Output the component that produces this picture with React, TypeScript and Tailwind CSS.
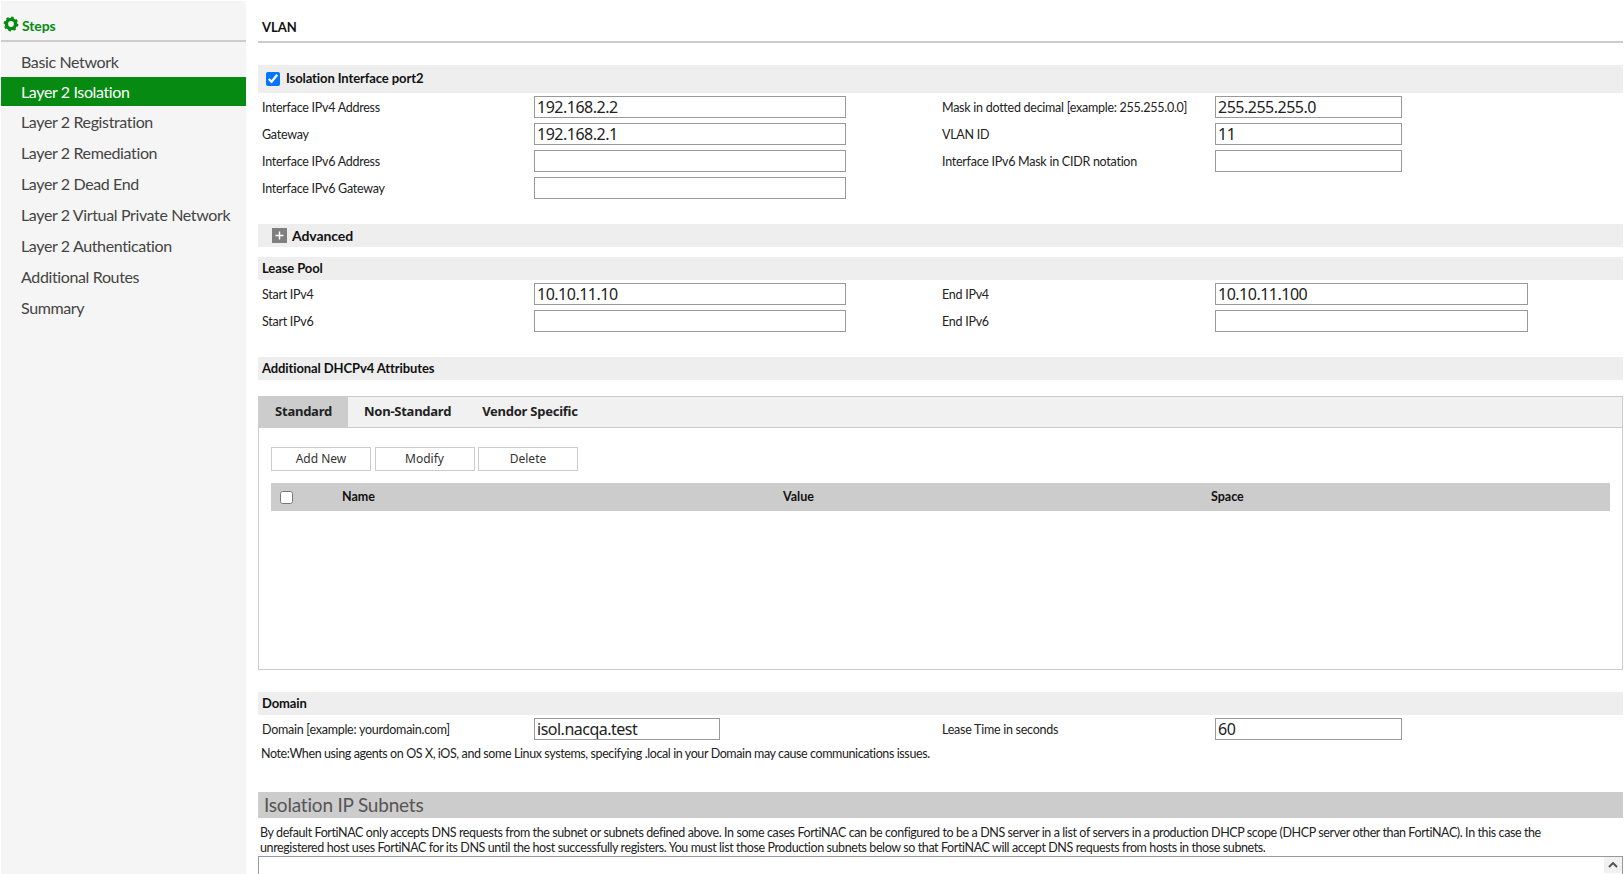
const labelFont = "font-['Lato','Liberation_Sans',sans-serif]";
const inputCls =
  "h-[22px] border border-[#999] bg-white px-[2px] text-[16px] leading-none tracking-[-0.5px] text-[#222] outline-none font-['Noto_Sans',sans-serif]";

const steps = [
  "Basic Network",
  "Layer 2 Isolation",
  "Layer 2 Registration",
  "Layer 2 Remediation",
  "Layer 2 Dead End",
  "Layer 2 Virtual Private Network",
  "Layer 2 Authentication",
  "Additional Routes",
  "Summary",
];

function Field({
  label,
  value = "",
  wide,
  right,
}: {
  label: string;
  value?: string;
  wide?: string;
  right?: boolean;
}) {
  return (
    <>
      <label className={`pt-[2px] text-[12.5px] tracking-[-0.26px] text-[#222] ${right ? "" : "pl-1"}`}>{label}</label>
      <input defaultValue={value} className={`${inputCls} ${wide ?? "w-[312px]"}`} />
    </>
  );
}

function Section({ children, className = "" }: { children: React.ReactNode; className?: string }) {
  return (
    <div className={`flex h-[23px] items-center bg-[#eeeeee] pl-1 text-[13px] font-bold tracking-[-0.1px] text-[#111] ${className}`}>
      {children}
    </div>
  );
}

const rowGrid = "grid grid-cols-[276px_408px_273px_1fr] items-center";

export default function App() {
  return (
    <div className={`flex h-[874px] w-[1624px] overflow-hidden bg-white ${labelFont}`}>
      {/* Steps */}
      <aside className="ml-px mt-px w-[245px] shrink-0 bg-[#f5f5f5]">
        <div className="flex h-[41px] items-end border-b-2 border-[#ccc] pb-[6px] pl-[2px]">
          <svg viewBox="0 0 16 16" className="mb-[2px] h-[16px] w-[16px] text-[#068a12]">
            <circle cx="8" cy="8" r="4.6" fill="none" stroke="currentColor" strokeWidth="3.4" />
            <circle cx="8" cy="8" r="6.6" fill="none" stroke="currentColor" strokeWidth="1.6" strokeDasharray="2.59 2.59" />
          </svg>
          <span className="ml-[3px] text-[14px] font-bold leading-[17px] tracking-[-0.1px] text-[#068a12]">Steps</span>
        </div>
        <ul className="mt-[4px]">
          {steps.map((s, i) => (
            <li
              key={s}
              className={`flex items-center pl-5 text-[16px] tracking-[-0.37px] ${
                i === 1 ? "h-[29px] bg-[#068a12] text-white" : "h-[31px] text-[#444]"
              }`}
            >
              {s}
            </li>
          ))}
        </ul>
      </aside>

      {/* Main */}
      <main className="ml-3 flex-1 pr-px">
        <div className="flex h-[43px] items-end border-b-2 border-[#ccc] pb-[4px] pl-1 text-[13px] font-bold text-[#111]">
          VLAN
        </div>

        <div className="mt-[22px] flex h-[28px] items-center bg-[#eeeeee] pl-2 text-[13px] font-bold tracking-[-0.1px] text-[#111]">
          <input type="checkbox" defaultChecked className="m-0 h-[14px] w-[14px] accent-[#0075ff]" />
          <span className="ml-[6px]">Isolation Interface port2</span>
        </div>
        <div className={`${rowGrid} mt-[3px] gap-y-[5px]`}>
          <Field label="Interface IPv4 Address" value="192.168.2.2" />
          <Field label="Mask in dotted decimal [example: 255.255.0.0]" value="255.255.255.0" wide="w-[187px]" right />
          <Field label="Gateway" value="192.168.2.1" />
          <Field label="VLAN ID" value="11" wide="w-[187px]" right />
          <Field label="Interface IPv6 Address" />
          <Field label="Interface IPv6 Mask in CIDR notation" wide="w-[187px]" right />
          <Field label="Interface IPv6 Gateway" />
        </div>

        <div className="mt-[25px] flex h-[23px] items-center bg-[#eeeeee] pl-[14px] text-[14px] font-bold tracking-[-0.1px] text-[#111]">
          <svg viewBox="0 0 15 15" className="h-[15px] w-[15px]">
            <rect width="15" height="15" fill="#7f7f7f" />
            <path d="M7.5 3.5v8M3.5 7.5h8" stroke="#fff" strokeWidth="1.4" />
          </svg>
          <span className="ml-[5px]">Advanced</span>
        </div>

        <Section className="mt-[10px]">Lease Pool</Section>
        <div className={`${rowGrid} mt-[3px] gap-y-[5px]`}>
          <Field label="Start IPv4" value="10.10.11.10" />
          <Field label="End IPv4" value="10.10.11.100" wide="w-[313px]" right />
          <Field label="Start IPv6" />
          <Field label="End IPv6" wide="w-[313px]" right />
        </div>

        <Section className="mt-[25px]">Additional DHCPv4 Attributes</Section>

        {/* Tabs */}
        <div className="mt-[16px] h-[274px] border border-[#ccc]">
          <div className="flex h-[31px] items-center border-b border-[#ccc] bg-[#f1f1f1] text-[13px] font-bold tracking-[-0.25px] text-[#222] font-['Noto_Sans',sans-serif]">
            <div className="flex h-full w-[89px] items-center justify-center bg-[#cccccc]">Standard</div>
            <div className="ml-[16px]">Non-Standard</div>
            <div className="ml-[31px]">Vendor Specific</div>
          </div>
          <div className="mt-[19px] flex gap-[3.5px] pl-[12px]">
            {["Add New", "Modify", "Delete"].map((b) => (
              <button
                key={b}
                className="h-[24px] w-[100px] border border-[#ccc] bg-white text-[12px] text-[#333] font-['Noto_Sans',sans-serif]"
              >
                {b}
              </button>
            ))}
          </div>
          <div className="mx-[12px] mt-[12px] flex h-[28px] items-center bg-[#cccccc] text-[12.5px] font-bold text-[#111]">
            <input type="checkbox" className="m-0 ml-[9px] h-[13px] w-[13px]" />
            <span className="ml-[49px] w-[441px]">Name</span>
            <span className="w-[428px]">Value</span>
            <span>Space</span>
          </div>
        </div>

        <Section className="mt-[22px]">Domain</Section>
        <div className={`${rowGrid} mt-[3px]`}>
          <Field label="Domain [example: yourdomain.com]" value="isol.nacqa.test" wide="w-[186px]" />
          <Field label="Lease Time in seconds" value="60" wide="w-[187px]" right />
        </div>
        <p className="mt-[5px] pl-[3px] text-[12.5px] leading-[17px] tracking-[-0.4px] text-[#222]">
          Note:When using agents on OS X, iOS, and some Linux systems, specifying .local in your Domain may cause
          communications issues.
        </p>

        <div className="mt-[30px] flex h-[26px] items-center bg-[#cccccc] pl-[6px] text-[19px] tracking-[-0.2px] text-[#555]">
          Isolation IP Subnets
        </div>
        <p className="mt-[7px] pl-[2px] pr-[50px] text-[12.5px] leading-[15px] tracking-[-0.4px] text-[#222]">
          By default FortiNAC only accepts DNS requests from the subnet or subnets defined above. In some cases
          FortiNAC can be configured to be a DNS server in a list of servers in a production DHCP scope (DHCP server
          other than FortiNAC). In this case the unregistered host uses FortiNAC for its DNS until the host successfully
          registers. You must list those Production subnets below so that FortiNAC will accept DNS requests from hosts in
          those subnets.
        </p>
        <div className="mt-px flex h-[40px] justify-end border border-[#999]">
          <div className="flex h-[16px] w-[18px] items-center justify-center bg-[#f1f1f1]">
            <svg viewBox="0 0 10 6" className="h-[6px] w-[10px]">
              <path d="M1 5l4-4 4 4" fill="none" stroke="#505050" strokeWidth="1.8" />
            </svg>
          </div>
        </div>
      </main>
    </div>
  );
}
